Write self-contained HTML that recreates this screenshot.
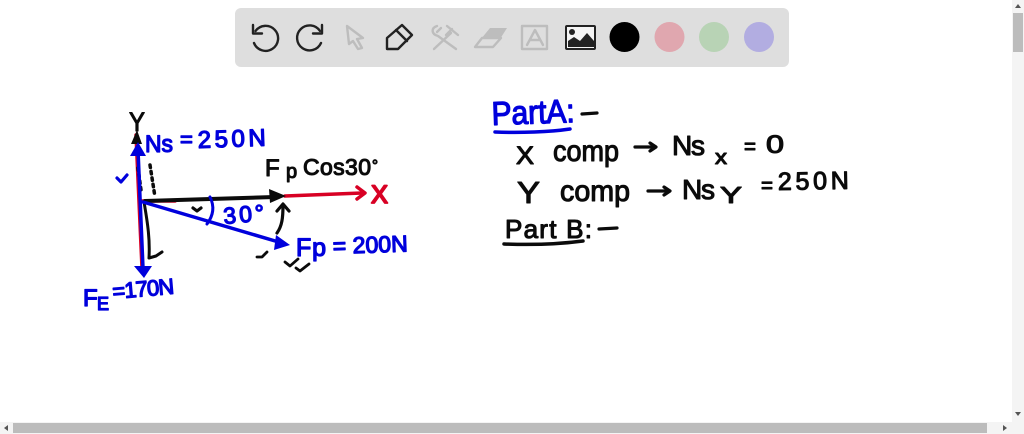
<!DOCTYPE html>
<html lang="en">
<head>
<meta charset="utf-8">
<title>Free body diagram</title>
<style>
html,body{margin:0;padding:0;width:1024px;height:434px;overflow:hidden;background:#fff}
svg{display:block;position:absolute;left:0;top:0}
text{font-family:"Liberation Sans",sans-serif;font-weight:400;stroke-linejoin:round}
.b{fill:#0000dc;stroke:#0000dc;stroke-width:1.300}
.k{fill:#0b0b0b;stroke:#0b0b0b;stroke-width:1.100}
.r{fill:#d80024;stroke:#d80024;stroke-width:1.800}
</style>
</head>
<body>
<svg width="1024" height="434" viewBox="0 0 1024 434" xmlns="http://www.w3.org/2000/svg">
<rect width="1024" height="434" fill="#fff"/>

<!-- toolbar -->
<rect x="235" y="8" width="554" height="59" rx="6" fill="#dedede"/>
<g fill="none" stroke="#222" stroke-width="2.400" stroke-linecap="round" stroke-linejoin="round">
  <path d="M255.500 31A12.500 12.500 0 1 1 254 43"/>
  <path d="M253 25V33.500H262"/>
  <path d="M320 31A12.500 12.500 0 1 0 321 43"/>
  <path d="M322 25V33.500H313"/>
  <path d="M387 49V38L402 25L412 35L398 49Z"/>
  <path d="M396 30L407 41"/>
</g>
<g fill="none" stroke="#bdbdbd" stroke-width="2.400" stroke-linecap="round" stroke-linejoin="round">
  <path d="M347 26L363 38L357 39L362 48L358 49L353 41L349 44Z"/>
  <path d="M437 26C431 28 431 34 438 36L456 49M441 28L437 32M434 49L451 33M447 26L458 35M452 29L446 35"/>
  <path d="M475 47L482 38H501L493 47Z"/>
  <rect x="522" y="26" width="25" height="23"/>
  <path d="M527 45L535 30L543 45M530 40H540"/>
</g>
<path d="M481 39L490 28H507L500 39Z" fill="#bdbdbd"/>
<rect x="566" y="26" width="29" height="23" rx="1" fill="#f4f4f4" stroke="#222" stroke-width="2"/>
<circle cx="572" cy="32" r="3" fill="#222"/>
<path d="M568 47V41L574 37L580 41L587 33L594 41V47Z" fill="#222"/>
<circle cx="624.500" cy="37" r="15" fill="#000"/>
<circle cx="669.500" cy="37" r="15" fill="#e0a7af"/>
<circle cx="714" cy="37" r="15" fill="#b8d3b5"/>
<circle cx="759" cy="37" r="15" fill="#b2ade1"/>

<!-- diagram lines -->
<g fill="none" stroke-linecap="round" stroke-linejoin="round">
  <path d="M136 135L142 268" stroke="#d80024" stroke-width="3.500"/>
  <path d="M140 201L175 201" stroke="#d80024" stroke-width="3.500"/>
  <path d="M285 196L362 193" stroke="#d80024" stroke-width="3.500"/>
  <path d="M357 187L365 193L357 199" stroke="#d80024" stroke-width="3.500"/>
  <path d="M145 201L275 197" stroke="#0b0b0b" stroke-width="4"/>
  <path d="M144 202C148 225 150 240 149 258L156 256L162 252" stroke="#0b0b0b" stroke-width="3"/>
  <path d="M150 165L155 197" stroke="#0b0b0b" stroke-width="3.500" stroke-dasharray="2.500 4"/>
  <path d="M138 168L141 190" stroke="#0b0b0b" stroke-width="3.500" stroke-dasharray="2.500 4"/>
  <path d="M138 150L143 268" stroke="#0000dc" stroke-width="3.500"/>
  <path d="M143 202L282 243" stroke="#0000dc" stroke-width="3.500"/>
  <path d="M210 197C215 207 213 216 207 224" stroke="#0000dc" stroke-width="3"/>
  <path d="M117 178L121 182L127 175" stroke="#0000dc" stroke-width="3.200"/>
  <path d="M193 208L197 211L201 208" stroke="#0b0b0b" stroke-width="3.200"/>
  <path d="M277 233C282 226 283 218 283 205" stroke="#0b0b0b" stroke-width="3.200"/>
  <path d="M277 211L283 204L289 211" stroke="#0b0b0b" stroke-width="3.200"/>
  <path d="M257 257L262 257L267 252" stroke="#0b0b0b" stroke-width="2.800"/>
  <path d="M285 262L290 266L298 259" stroke="#0b0b0b" stroke-width="2.800"/>
  <path d="M296 268L300 271L309 264" stroke="#0b0b0b" stroke-width="2.800"/>
  <path d="M495 132C520 133 550 132 570 129" stroke="#0000dc" stroke-width="3.500"/>
  <path d="M504 244C530 245 560 244 583 241" stroke="#0b0b0b" stroke-width="3.500"/>
  <path d="M582 114L597 113" stroke="#0b0b0b" stroke-width="3.200"/>
  <path d="M599 229L617 228" stroke="#0b0b0b" stroke-width="3.200"/>
  <path d="M635 147L655 147M650 143L656 147L650 151" stroke="#0b0b0b" stroke-width="3.200"/>
  <path d="M648 191L669 191M664 187L670 191L664 195" stroke="#0b0b0b" stroke-width="3.200"/>
</g>
<path d="M131 144L137 130L142 144Z" fill="#0b0b0b"/>
<path d="M130 156L138 142L146 156Z" fill="#0000dc"/>
<path d="M134 266L152 266L144 278Z" fill="#0000dc"/>
<path d="M269 189L286 196L270 203Z" fill="#0b0b0b"/>
<path d="M276 235L290 245L274 250Z" fill="#0000dc"/>

<!-- diagram labels -->
<text class="k" x="129" y="131" font-size="27" textLength="16" lengthAdjust="spacingAndGlyphs">Y</text>
<text class="b" x="145" y="152" font-size="24" textLength="28" lengthAdjust="spacingAndGlyphs">Ns</text>
<text class="b" x="180" y="147" font-size="22">=</text>
<text class="b" x="198" y="148" font-size="24" textLength="68" lengthAdjust="spacing" transform="rotate(-2 198 148)">250N</text>
<text class="k" x="265" y="176" font-size="24">F</text>
<text class="k" x="286" y="178" font-size="20">p</text>
<text class="k" x="303" y="175" font-size="23" textLength="68" lengthAdjust="spacing">Cos30</text>
<text class="k" x="372" y="170" font-size="15">°</text>
<text class="r" x="371" y="203" font-size="25" textLength="17" lengthAdjust="spacingAndGlyphs">X</text>
<text class="b" x="224" y="224" font-size="23" textLength="41" lengthAdjust="spacing" transform="rotate(-5 224 224)">30°</text>
<text class="b" x="296" y="256" font-size="25" textLength="30" lengthAdjust="spacing">Fp</text>
<text class="b" x="333" y="254" font-size="23" textLength="75" lengthAdjust="spacing" transform="rotate(-2 333 254)">= 200N</text>
<text class="b" x="83" y="306" font-size="24">F</text>
<text class="b" x="97" y="310" font-size="18">E</text>
<text class="b" x="113" y="299" font-size="22" textLength="62" lengthAdjust="spacing" transform="rotate(-5 113 299)">=170N</text>

<!-- notes -->
<text class="b" x="492" y="125" font-size="33" textLength="83" lengthAdjust="spacingAndGlyphs" transform="rotate(-2 492 125)">PartA:</text>
<text class="k" x="516" y="164" font-size="25" textLength="18" lengthAdjust="spacingAndGlyphs">X</text>
<text class="k" x="553" y="161" font-size="30" textLength="66" lengthAdjust="spacingAndGlyphs">comp</text>
<text class="k" x="672" y="155" font-size="28" textLength="33" lengthAdjust="spacing">Ns</text>
<text class="k" x="715" y="164" font-size="20" textLength="12" lengthAdjust="spacingAndGlyphs">x</text>
<text class="k" x="744" y="154" font-size="22" textLength="12" lengthAdjust="spacingAndGlyphs">=</text>
<text class="k" x="766" y="153" font-size="25" textLength="18" lengthAdjust="spacingAndGlyphs">0</text>
<text class="k" x="517" y="203" font-size="31" textLength="23" lengthAdjust="spacingAndGlyphs">Y</text>
<text class="k" x="560" y="201" font-size="30" textLength="70" lengthAdjust="spacingAndGlyphs">comp</text>
<text class="k" x="682" y="199" font-size="28" textLength="33" lengthAdjust="spacing">Ns</text>
<text class="k" x="720" y="203" font-size="23" textLength="22" lengthAdjust="spacingAndGlyphs">Y</text>
<text class="k" x="761" y="193" font-size="22" textLength="12" lengthAdjust="spacingAndGlyphs">=</text>
<text class="k" x="778" y="190" font-size="25" textLength="71" lengthAdjust="spacing" transform="rotate(-1 778 190)">250N</text>
<text class="k" x="505" y="238" font-size="26" textLength="87" lengthAdjust="spacing">Part B:</text>

<!-- scrollbars -->
<rect x="1012" y="0" width="12" height="434" fill="#f4f4f4"/>
<rect x="0" y="422" width="1024" height="12" fill="#f4f4f4"/>
<rect x="1013" y="13" width="10" height="39" fill="#bcbcbc"/>
<rect x="13" y="423" width="974" height="10" fill="#bcbcbc"/>
<path d="M1018 4L1021 8H1015Z" fill="#555"/>
<path d="M1015 412H1021L1018 416Z" fill="#555"/>
<path d="M8 425V431L4 428Z" fill="#555"/>
<path d="M1003 425V431L1007 428Z" fill="#555"/>
</svg>
</body>
</html>
